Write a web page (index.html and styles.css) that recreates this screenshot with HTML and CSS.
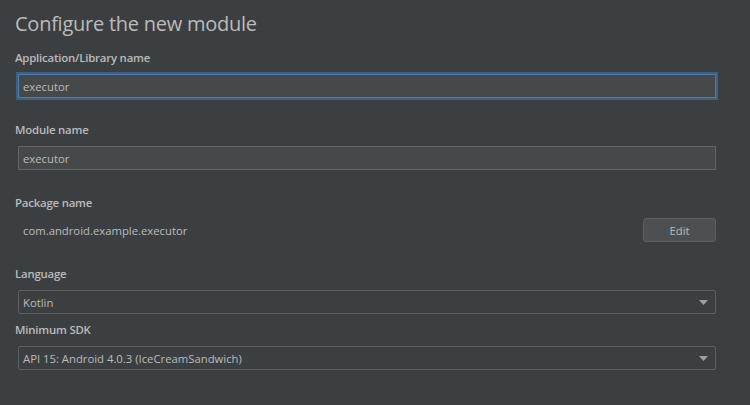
FILE: index.html
```html
<!DOCTYPE html>
<html>
<head>
<meta charset="utf-8">
<link rel="stylesheet" href="styles.css">
</head>
<body>
<div class="page">
  <h1 class="title">Configure the new module</h1>

  <div class="label label-app">Application/Library name</div>
  <div class="field focused"><span class="value">executor</span></div>

  <div class="label label-module">Module name</div>
  <div class="field"><span class="value">executor</span></div>

  <div class="label label-package">Package name</div>
  <div class="package-row">
    <span class="package-text">com.android.example.executor</span>
    <button class="btn">Edit</button>
  </div>

  <div class="label label-lang">Language</div>
  <div class="combo">
    <span class="value">Kotlin</span>
    <svg class="arrow" width="9" height="5" viewBox="0 0 9 5"><path d="M0 0H9L4.5 5Z" fill="#a0a0a0"/></svg>
  </div>

  <div class="label label-sdk">Minimum SDK</div>
  <div class="combo">
    <span class="value">API 15: Android 4.0.3 (IceCreamSandwich)</span>
    <svg class="arrow" width="9" height="5" viewBox="0 0 9 5"><path d="M0 0H9L4.5 5Z" fill="#a0a0a0"/></svg>
  </div>
</div>
</body>
</html>
```
FILE: styles.css
```css
html, body {
  margin: 0;
  padding: 0;
  background: #3c3f41;
}
body {
  width: 750px;
  height: 405px;
  overflow: hidden;
  font-family: "Open Sans", "Noto Sans", sans-serif;
  color: #bbbbbb;
}
.page {
  display: flex;
  flex-direction: column;
  padding: 10px 34px 0 15px;
}
.title {
  margin: 0;
  font-size: 20px;
  font-weight: 400;
  line-height: 28px;
  height: 28px;
  color: #bbbbbb;
  letter-spacing: -0.25px;
}
.label {
  font-size: 11.4px;
  line-height: 16px;
  height: 16px;
  color: #bbbbbb;
  font-weight: 600;
  letter-spacing: -0.2px;
}
.label-app { margin-top: 12px; }
.label-module { margin-top: 24px; }
.label-package { margin-top: 25px; }
.label-lang { margin-top: 24px; }
.label-sdk { margin-top: 8px; }

.field, .combo {
  box-sizing: border-box;
  margin-left: 3px;
  height: 24px;
  border: 1px solid #646464;
  background: #45494a;
  display: flex;
  align-items: center;
  padding-left: 4px;
  font-size: 11.3px;
  color: #bbbbbb;
}
.field { margin-top: 8px; }
.field.focused {
  border-color: #4a7cae;
  box-shadow: 0 0 0 2px #3d6185;
}
.combo {
  margin-top: 8px;
  background: #3c3f41;
  border-color: #5e6060;
  border-radius: 2px;
  justify-content: space-between;
  padding-right: 7px;
}
.arrow { display: block; }

.package-row {
  margin-top: 7px;
  height: 24px;
  display: flex;
  align-items: center;
  justify-content: space-between;
}
.package-text {
  padding-left: 8px;
  font-size: 11.3px;
  color: #bbbbbb;
}
.btn {
  box-sizing: border-box;
  width: 73px;
  height: 24px;
  border: 1px solid #5e6060;
  border-radius: 3px;
  background: #4c5052;
  color: #bbbbbb;
  font-family: "Open Sans", "Noto Sans", sans-serif;
  font-size: 11.3px;
  padding: 0;
}
```
